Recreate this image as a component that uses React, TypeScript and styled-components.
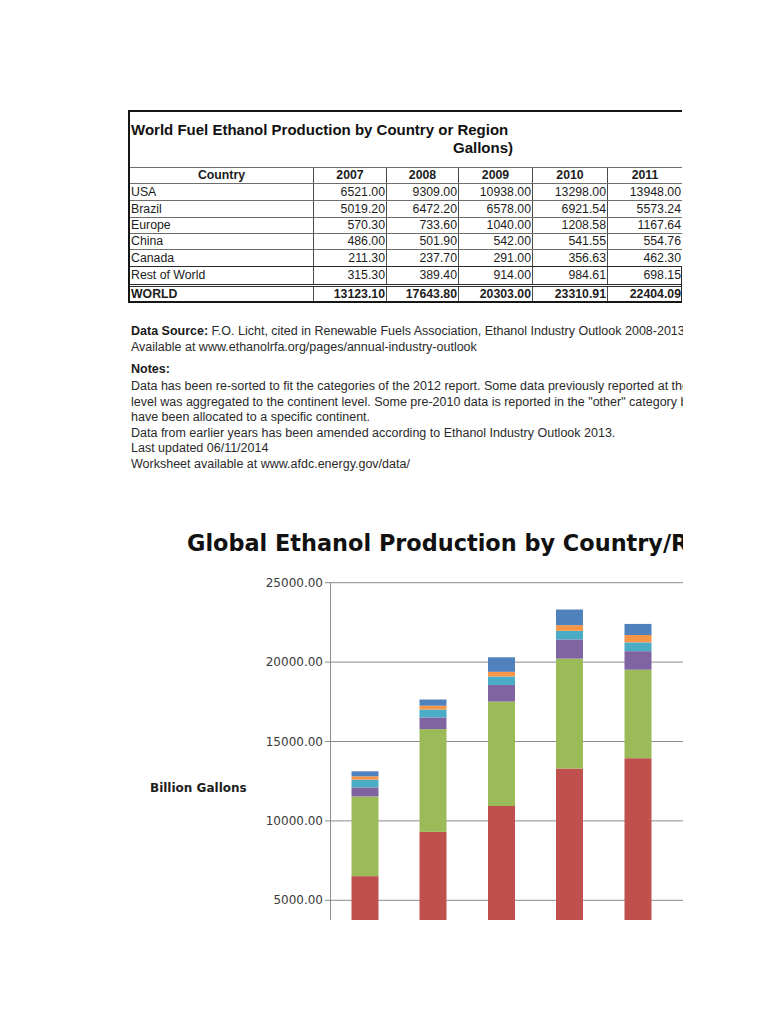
import React from "react";
import styled, { createGlobalStyle } from "styled-components";

const GlobalStyle = createGlobalStyle`
  html, body { margin: 0; padding: 0; background: #ffffff; }
  body { font-family: "Liberation Sans", Arial, sans-serif; }
`;

const Page = styled.div`
  margin-left: 128px;
  width: 555px;
  height: 920px;
  padding-top: 110px;
  box-sizing: border-box;
  overflow: hidden;
`;

const DataTable = styled.div`
  width: 554px;
  box-sizing: border-box;
  border: 2px solid #161616;
  border-right: none;
  font-family: "Liberation Sans", Arial, sans-serif;
  color: #1c1c1c;
`;

const TitleBlock = styled.div`
  height: 55px;
  padding-top: 9px;
  box-sizing: border-box;
  font-size: 15px;
  font-weight: bold;
  line-height: 18px;
  color: #111;
`;

const TitleLine = styled.div<{ $indent: number }>`
  padding-left: ${(p) => p.$indent}px;
  white-space: nowrap;
`;

type RowKind = "head" | "body" | "boxed" | "total";

const Row = styled.div<{ $h: number; $kind: RowKind }>`
  display: grid;
  grid-template-columns: 183px 73px 72px 74px 75px 75px;
  height: ${(p) => p.$h}px;
  box-sizing: border-box;
  border-top: ${(p) =>
    p.$kind === "total"
      ? "3px double #2a2a2a"
      : p.$kind === "boxed"
      ? "1px solid #2a2a2a"
      : "1px solid #6e6e6e"};
  border-right: ${(p) =>
    p.$kind === "boxed" || p.$kind === "total" ? "1px solid #2a2a2a" : "none"};
  font-weight: ${(p) => (p.$kind === "head" || p.$kind === "total" ? "bold" : "normal")};
  font-size: 12.3px;
  line-height: ${(p) => p.$h - (p.$kind === "total" ? 3 : 1)}px;
`;

const Cell = styled.div<{ $align: "left" | "right" | "center"; $first?: boolean }>`
  box-sizing: border-box;
  border-left: ${(p) => (p.$first ? "none" : "1px solid #4a4a4a")};
  text-align: ${(p) => p.$align};
  padding: 0 1px;
  white-space: nowrap;
  overflow: hidden;
`;

const Notes = styled.div`
  margin-top: 20px;
  padding-left: 3px;
  font-family: "Liberation Sans", Arial, sans-serif;
  font-size: 12.5px;
  color: #2a2a2a;
  white-space: nowrap;
`;

const Block = styled.div<{ $lh: number; $gap: number }>`
  line-height: ${(p) => p.$lh}px;
  margin-top: ${(p) => p.$gap}px;
`;

const Strong = styled.span`
  font-weight: bold;
  color: #1a1a1a;
`;

const ChartTitle = styled.div`
  margin-top: 56px;
  padding-left: 59px;
  font-family: "DejaVu Sans", sans-serif;
  font-weight: bold;
  font-size: 22.4px;
  line-height: 28px;
  color: #111;
  white-space: nowrap;
`;

const ChartBody = styled.div`
  display: flex;
  margin-top: 13px;
`;

const AxisTitle = styled.div`
  width: 132px;
  flex: none;
  box-sizing: border-box;
  padding-left: 22px;
  padding-top: 210px;
  font-family: "DejaVu Sans", sans-serif;
  font-weight: bold;
  font-size: 12px;
  line-height: 16px;
  color: #1e1e1e;
  white-space: nowrap;
`;

const Plot = styled.svg`
  flex: none;
  display: block;
`;

const years = ["2007", "2008", "2009", "2010", "2011"];
const rows: { name: string; vals: number[]; h: number; kind: RowKind }[] = [
  { name: "USA", vals: [6521.0, 9309.0, 10938.0, 13298.0, 13948.0], h: 17, kind: "body" },
  { name: "Brazil", vals: [5019.2, 6472.2, 6578.0, 6921.54, 5573.24], h: 17, kind: "body" },
  { name: "Europe", vals: [570.3, 733.6, 1040.0, 1208.58, 1167.64], h: 16, kind: "body" },
  { name: "China", vals: [486.0, 501.9, 542.0, 541.55, 554.76], h: 16, kind: "body" },
  { name: "Canada", vals: [211.3, 237.7, 291.0, 356.63, 462.3], h: 17, kind: "body" },
  { name: "Rest of World", vals: [315.3, 389.4, 914.0, 984.61, 698.15], h: 18, kind: "boxed" },
];
const totals = [13123.1, 17643.8, 20303.0, 23310.91, 22404.09];
const colors = ["#C0504D", "#9BBB59", "#8064A2", "#4BACC6", "#F79646", "#4F81BD"];

const top = 12.7;
const scale = 0.01588;
const yOf = (v: number) => top + (25000 - v) * scale;
const barX = [91.5, 159.5, 228, 296, 364.5];

export default function App() {
  return (
    <>
      <GlobalStyle />
      <Page>
        <DataTable>
          <TitleBlock>
            <TitleLine $indent={1}>World Fuel Ethanol Production by Country or Region</TitleLine>
            <TitleLine $indent={323}>Gallons)</TitleLine>
          </TitleBlock>
          <Row $h={16} $kind="head">
            <Cell $align="center" $first>Country</Cell>
            {years.map((y) => (
              <Cell key={y} $align="center">{y}</Cell>
            ))}
          </Row>
          {rows.map((r) => (
            <Row key={r.name} $h={r.h} $kind={r.kind}>
              <Cell $align="left" $first>{r.name}</Cell>
              {r.vals.map((v, i) => (
                <Cell key={i} $align="right">{v.toFixed(2)}</Cell>
              ))}
            </Row>
          ))}
          <Row $h={17} $kind="total">
            <Cell $align="left" $first>WORLD</Cell>
            {totals.map((v, i) => (
              <Cell key={i} $align="right">{v.toFixed(2)}</Cell>
            ))}
          </Row>
        </DataTable>

        <Notes>
          <Block $lh={16} $gap={0}>
            <div>
              <Strong>Data Source:</Strong> F.O. Licht, cited in Renewable Fuels Association, Ethanol Industry Outlook 2008-2013
            </div>
            <div>Available at www.ethanolrfa.org/pages/annual-industry-outlook</div>
          </Block>
          <Block $lh={16} $gap={6}>
            <Strong>Notes:</Strong>
          </Block>
          <Block $lh={15.6} $gap={2}>
            <div>
              Data has been re-sorted to fit the categories of the 2012 report. Some data previously reported at the country
            </div>
            <div>
              level was aggregated to the continent level. Some pre-2010 data is reported in the "other" category because it
            </div>
            <div>have been allocated to a specific continent.</div>
            <div>Data from earlier years has been amended according to Ethanol Industry Outlook 2013.</div>
            <div>Last updated 06/11/2014</div>
            <div>Worksheet available at www.afdc.energy.gov/data/</div>
          </Block>
        </Notes>

        <ChartTitle>Global Ethanol Production by Country/Region</ChartTitle>
        <ChartBody>
          <AxisTitle>Billion Gallons</AxisTitle>
          <Plot width={423} height={350} viewBox="0 0 423 350">
            {[25000, 20000, 15000, 10000, 5000, 0].map((v) => (
              <g key={v}>
                <line x1={65} x2={423} y1={yOf(v)} y2={yOf(v)} stroke="#8c8c8c" strokeWidth={1} />
                <text
                  x={63}
                  y={yOf(v)}
                  textAnchor="end"
                  dominantBaseline="central"
                  fontFamily="DejaVu Sans, sans-serif"
                  fontSize={12}
                  fill="#3a3a3a"
                >
                  {v.toFixed(2)}
                </text>
              </g>
            ))}
            <line x1={70.5} x2={70.5} y1={top} y2={350} stroke="#8c8c8c" strokeWidth={1} />
            {years.map((y, i) => {
              let acc = 0;
              return (
                <g key={y}>
                  {rows.map((r, j) => {
                    const v = r.vals[i];
                    const y1 = yOf(acc + v);
                    const y0 = yOf(acc);
                    acc += v;
                    return (
                      <rect key={j} x={barX[i]} y={y1} width={27} height={y0 - y1} fill={colors[j]} />
                    );
                  })}
                </g>
              );
            })}
          </Plot>
        </ChartBody>
      </Page>
    </>
  );
}
